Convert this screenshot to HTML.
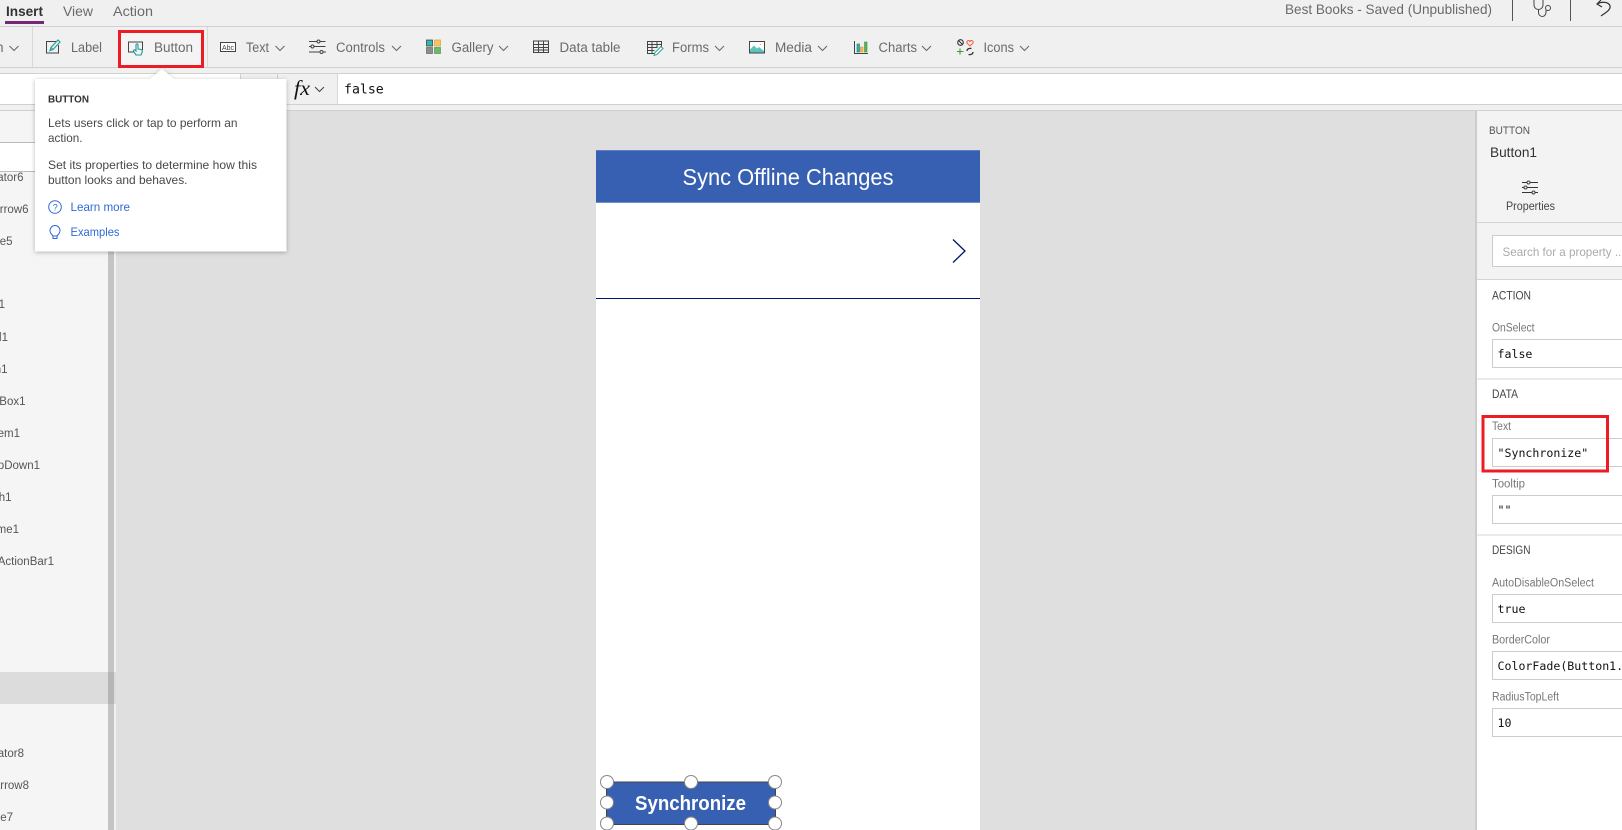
<!DOCTYPE html>
<html lang="en"><head><meta charset="utf-8"><title>Best Books</title>
<style>
html,body{margin:0;padding:0;background:#dfdfdf;overflow:hidden;width:1622px;height:830px}
svg{display:block}
text{font-family:"Liberation Sans",sans-serif;white-space:pre}
.r{font-size:13.5px;fill:#6a6a6a}
.t{font-size:14px;fill:#6a6a6a}
.l{font-size:11.5px;fill:#555}
.p{font-size:12px;fill:#484848}
.a{font-size:12px;fill:#2f6ad9}
.h{font-size:11.5px;fill:#444}
.f{font-size:11.5px;fill:#777}
text.m{font-family:"DejaVu Sans Mono",monospace;font-size:11.6px;fill:#111}
text.fm{font-family:"DejaVu Sans Mono",monospace;font-size:13.2px;fill:#111}
text.fx{font-family:"Liberation Serif",serif;font-style:italic;font-size:21px;fill:#111}
.c{fill:none;stroke:#666;stroke-width:1}
.d{fill:none;stroke:#444;stroke-width:1}
.g{fill:#fff;stroke:#888;stroke-width:1}
.b{fill:#fff;stroke:#ccc;stroke-width:1}
</style></head><body>
<svg xmlns="http://www.w3.org/2000/svg" width="1622" height="830" viewBox="0 0 1622 830">
<rect width="1622" height="830" fill="#dfdfdf"/>
<!-- top bars -->
<rect width="1622" height="111" fill="#f0f0f0"/>
<rect y="26" width="1622" height="1" fill="#d0d0d0"/>
<rect y="67" width="1622" height="1" fill="#d0d0d0"/>
<rect y="73" width="1622" height="1" fill="#d0d0d0"/>
<rect y="74" width="240" height="30" fill="#fff"/>
<rect x="240" y="73" width="1" height="31" fill="#d0d0d0"/>
<rect x="277" y="73" width="1" height="31" fill="#d0d0d0"/>
<rect x="337" y="74" width="1285" height="30" fill="#fff"/>
<rect x="337" y="74" width="1" height="30" fill="#d8d8d8"/>
<rect y="104" width="1622" height="1" fill="#d0d0d0"/>
<rect y="110" width="1622" height="1" fill="#d0d0d0"/>
<!-- tabs -->
<text x="6" y="16" font-size="14" font-weight="bold" fill="#333" textLength="37" lengthAdjust="spacingAndGlyphs">Insert</text>
<rect x="5" y="21" width="39" height="3" fill="#742774"/>
<text class="t" x="63" y="16" textLength="30" lengthAdjust="spacingAndGlyphs">View</text>
<text class="t" x="113" y="16" textLength="40" lengthAdjust="spacingAndGlyphs">Action</text>
<text class="t" x="1285" y="14" textLength="207" lengthAdjust="spacingAndGlyphs">Best Books - Saved (Unpublished)</text>
<rect x="1512" y="0" width="1" height="21" fill="#555"/>
<rect x="1570" y="0" width="1" height="21" fill="#555"/>
<path d="M1534 0v5c0 2.500 2 4.500 4.500 4.500s4.500-2 4.500-4.500V0M1538.500 9.500v3c0 2.500 2 4 4 4s3.500-2 3.500-4.500v-2" fill="none" stroke="#444"/>
<circle cx="1548" cy="8" r="2.500" fill="none" stroke="#444"/>
<path d="M1601 0l-4 4 5 3M1597 4c5-3 12-2 13 2 1 4-5 7-9 10" fill="none" stroke="#333" stroke-width="1.200"/>
<!-- ribbon -->
<text class="r" x="-4" y="52">n</text>
<path class="c" d="M9.500 46l4.500 4.500 4.500-4.500"/>
<rect x="32" y="27" width="1" height="40" fill="#d8d8d8"/>
<path d="M56 41.500h-9.500v11.500h12V45" class="d"/>
<path d="M50 50.500l1-3 7-7.500 2 2-7 7.500zM51 47.500l2 2" fill="none" stroke="#2aa198" stroke-width="1.200"/>
<text class="r" x="71" y="52" textLength="31" lengthAdjust="spacingAndGlyphs">Label</text>
<rect x="119.500" y="31.500" width="83" height="35" fill="#f4f4f4" stroke="#ed1c24" stroke-width="3"/>
<path d="M136 52h-7.500V42h14v8" class="d"/>
<path d="M136 55c-1-2-3-3-2.500-4.500s2 0 2.500 .5v-6c0-1.500 2-1.500 2 0v4l3 .5c1.500 .5 1.500 2 1 3l-1 2.500z" fill="#f4f4f4" stroke="#1d9a90" stroke-width="1.100"/>
<text class="r" x="154" y="52" textLength="39" lengthAdjust="spacingAndGlyphs">Button</text>
<rect x="207" y="27" width="1" height="40" fill="#d8d8d8"/>
<rect x="220.500" y="42.500" width="15" height="9" fill="#fff" stroke="#444"/>
<text x="222" y="50" font-size="7.500" fill="#444" textLength="12" lengthAdjust="spacingAndGlyphs">Abc</text>
<text class="r" x="246" y="52" textLength="23" lengthAdjust="spacingAndGlyphs">Text</text>
<path class="c" d="M275.500 46l4.500 4.500 4.500-4.500"/>
<path class="d" d="M309 41.500h8m3 0h5.500M309 46.500h2m3 0h11.500M309 52h11m3 0h3"/>
<circle class="d" cx="318.500" cy="41.500" r="1.500"/><circle class="d" cx="312.500" cy="46.500" r="1.500"/><circle class="d" cx="321.500" cy="52" r="1.500"/>
<text class="r" x="336" y="52" textLength="49" lengthAdjust="spacingAndGlyphs">Controls</text>
<path class="c" d="M392 46l4.500 4.500 4.500-4.500"/>
<rect x="426.500" y="40" width="6" height="6" fill="#34b5ad" stroke="#333" stroke-width=".7"/>
<rect x="434.500" y="40" width="6" height="6" fill="#fbc465" stroke="#d9a040" stroke-width=".7"/>
<rect x="426.500" y="47.500" width="6" height="6" fill="#8c8c8c" stroke="#666" stroke-width=".7"/>
<rect x="434.500" y="47.500" width="6" height="6" fill="#70b870" stroke="#4c9a4c" stroke-width=".7"/>
<text class="r" x="451.500" y="52" textLength="42" lengthAdjust="spacingAndGlyphs">Gallery</text>
<path class="c" d="M499 46l4.500 4.500 4.500-4.500"/>
<rect x="533.500" y="41" width="15" height="11.500" fill="#f0f0f0" stroke="#444"/>
<path class="d" d="M533.500 44.500h15M533.500 47.500h15M533.500 50h15M538.500 41v11.500M543.500 41v11.500"/>
<text class="r" x="559.500" y="52" textLength="61" lengthAdjust="spacingAndGlyphs">Data table</text>
<path class="d" d="M655 53.500h-7.500V41.500h14v6M647.500 44.500h14M647.500 47.500h10M647.500 50.500h7M652 41.500v12M657 41.500v6"/>
<path d="M654 55.500l1-3 6-6 2 2-6 6z" fill="#fff" stroke="#2aa198"/>
<text class="r" x="672" y="52" textLength="37" lengthAdjust="spacingAndGlyphs">Forms</text>
<path class="c" d="M715 46l4.500 4.500 4.500-4.500"/>
<rect x="749.500" y="41.500" width="15" height="11.500" fill="#fff" stroke="#444"/>
<path d="M750 52.500v-3l4-4 3 3 2-1.500 5 4v1.500z" fill="#5cc4bd"/>
<rect x="760" y="44" width="1" height="1" fill="#e8b040"/>
<text class="r" x="775" y="52" textLength="37" lengthAdjust="spacingAndGlyphs">Media</text>
<path class="c" d="M818 46l4.500 4.500 4.500-4.500"/>
<path class="d" d="M854.500 41v12.500H868"/>
<rect x="857" y="44" width="2.500" height="8" fill="#2fb0a8" stroke="#1d7a76" stroke-width=".6"/>
<rect x="860.500" y="47" width="2.500" height="5" fill="#fbb84a" stroke="#d99a30" stroke-width=".6"/>
<rect x="864.500" y="42" width="2.500" height="10" fill="#5cb35c" stroke="#3f913f" stroke-width=".6"/>
<text class="r" x="878.500" y="52" textLength="38.500" lengthAdjust="spacingAndGlyphs">Charts</text>
<path class="c" d="M922 46l4.500 4.500 4.500-4.500"/>
<circle cx="960.500" cy="42.500" r="2.800" fill="none" stroke="#333" stroke-width="1.100"/><path d="M958.500 40.500l4 4" stroke="#333" stroke-width="1"/>
<path d="M970 46l-3-3c-1-2 2-3.500 3-1.500 1-2 4-.5 3 1.500z" fill="none" stroke="#ef6a4a" stroke-width="1.100"/>
<path d="M960 48.500v6M957 51.500h6.500" stroke="#3a9a3a" stroke-width="1.100" fill="none"/>
<path d="M967 51c0-2 2-3 4.500-2.500M973 52c0 2-2 3-4.500 2.500" fill="none" stroke="#333" stroke-width="1.300"/>
<text class="r" x="983.500" y="52" textLength="30.500" lengthAdjust="spacingAndGlyphs">Icons</text>
<path class="c" d="M1020 46l4.500 4.500 4.500-4.500"/>
<!-- formula bar -->
<text class="fx" x="294" y="95" textLength="16" lengthAdjust="spacingAndGlyphs">fx</text>
<path class="c" d="M315 87l4.500 4.500 4.500-4.500" style="stroke:#444"/>
<text class="fm" x="344" y="93.500">false</text>
<!-- left panel -->
<rect y="111" width="108" height="719" fill="#f5f5f5"/>
<rect y="142" width="108" height="1" fill="#bbb"/>
<rect y="143" width="108" height="28" fill="#fff"/>
<rect y="171" width="108" height="1" fill="#bbb"/>
<rect x="108" y="111" width="6" height="719" fill="#c4c4c4"/>
<rect x="114" y="111" width="2" height="719" fill="#f2f2f2"/>
<g text-anchor="end">
<text class="l" x="23.500" y="181">Separator6</text>
<text class="l" x="28.500" y="213">Arrow6</text>
<text class="l" x="12.500" y="245">Rectangle5</text>
<text class="l" x="5" y="308">Label1</text>
<text class="l" x="8" y="341">Control1</text>
<text class="l" x="7.500" y="373">Screen1</text>
<text class="l" x="25.500" y="405">TextBox1</text>
<text class="l" x="20" y="437">Item1</text>
<text class="l" x="40" y="469">DropDown1</text>
<text class="l" x="11.500" y="501">Search1</text>
<text class="l" x="19" y="533">Frame1</text>
<text class="l" x="54" y="565">ActionBar1</text>
<text class="l" x="24" y="757">Separator8</text>
<text class="l" x="29" y="789">Arrow8</text>
<text class="l" x="13" y="821">Rectangle7</text>
</g>
<rect y="672" width="116" height="32" fill="#dcdcdc"/>
<rect x="108" y="672" width="6" height="32" fill="#b6b6b6"/>
<!-- phone -->
<rect x="596" y="150" width="384" height="680" fill="#fff"/>
<rect x="596" y="150" width="384" height="53" fill="#3860b2"/>
<rect x="596" y="150" width="384" height="1" fill="#5f7fc4"/>
<rect x="596" y="202" width="384" height="1" fill="#6f8fd0"/>
<text x="682.500" y="185" font-size="23" fill="#fff" textLength="211" lengthAdjust="spacingAndGlyphs">Sync Offline Changes</text>
<path d="M953 239.500l12 11.500-12 11.500" fill="none" stroke="#00146e" stroke-width="1.300"/>
<rect x="596" y="298" width="384" height="1" fill="#00146e"/>
<rect x="606.500" y="782" width="169" height="42.500" fill="#3860b2" stroke="#444" stroke-width="1"/>
<text x="635" y="810" font-size="20" font-weight="bold" fill="#fff" textLength="111" lengthAdjust="spacingAndGlyphs">Synchronize</text>
<g>
<circle class="g" cx="607" cy="782" r="6.500"/><circle class="g" cx="691" cy="782" r="6.500"/><circle class="g" cx="775" cy="782" r="6.500"/>
<circle class="g" cx="607" cy="802.500" r="6.500"/><circle class="g" cx="775" cy="802.500" r="6.500"/>
<circle class="g" cx="607" cy="823.500" r="6.500"/><circle class="g" cx="691" cy="823.500" r="6.500"/><circle class="g" cx="775" cy="823.500" r="6.500"/>
</g>
<!-- right panel -->
<rect x="1475" y="111" width="147" height="719" fill="#fff"/>
<rect x="1475" y="111" width="2" height="719" fill="#ccc"/>
<rect x="1477" y="111" width="145" height="168" fill="#f3f3f3"/>
<rect x="1477" y="222" width="145" height="1" fill="#d4d4d4"/>
<rect x="1477" y="279" width="145" height="1" fill="#d4d4d4"/>
<text x="1489" y="134" font-size="11" fill="#555" textLength="41" lengthAdjust="spacingAndGlyphs">BUTTON</text>
<text x="1490" y="157" font-size="14" fill="#333" textLength="47" lengthAdjust="spacingAndGlyphs">Button1</text>
<path class="d" d="M1522 182.500h5m3 0h8M1522 187.500h2m3 0h11M1522 192.500h10m3 0h3" style="stroke:#333"/>
<circle class="d" cx="1528.500" cy="182.500" r="1.500"/><circle class="d" cx="1525.500" cy="187.500" r="1.500"/><circle class="d" cx="1533.500" cy="192.500" r="1.500"/>
<text x="1506" y="210" font-size="11.500" fill="#444" textLength="49" lengthAdjust="spacingAndGlyphs">Properties</text>
<rect class="b" x="1492.500" y="235.500" width="140" height="31"/>
<text x="1502.500" y="256" font-size="12" fill="#aaa" textLength="122" lengthAdjust="spacingAndGlyphs">Search for a property ...</text>
<text class="h" x="1492" y="299.500" textLength="39" lengthAdjust="spacingAndGlyphs">ACTION</text>
<text class="f" x="1492" y="331.500" textLength="42.500" lengthAdjust="spacingAndGlyphs">OnSelect</text>
<rect class="b" x="1492.500" y="339.500" width="140" height="28"/>
<text class="m" x="1497.500" y="358">false</text>
<rect x="1477" y="378.500" width="145" height="1" fill="#d4d4d4"/>
<text class="h" x="1492" y="398" textLength="26" lengthAdjust="spacingAndGlyphs">DATA</text>
<text class="f" x="1492" y="430" textLength="19" lengthAdjust="spacingAndGlyphs">Text</text>
<rect class="b" x="1492.500" y="438.500" width="140" height="28"/>
<text class="m" x="1497.500" y="457">"Synchronize"</text>
<text class="f" x="1492" y="487.500" textLength="33" lengthAdjust="spacingAndGlyphs">Tooltip</text>
<rect class="b" x="1492.500" y="495.500" width="140" height="28"/>
<text class="m" x="1497.500" y="514">""</text>
<rect x="1477" y="534.500" width="145" height="1" fill="#d4d4d4"/>
<text class="h" x="1492" y="554" textLength="38.500" lengthAdjust="spacingAndGlyphs">DESIGN</text>
<text class="f" x="1492" y="586.500" textLength="102" lengthAdjust="spacingAndGlyphs">AutoDisableOnSelect</text>
<rect class="b" x="1492.500" y="594.500" width="140" height="28"/>
<text class="m" x="1497.500" y="613">true</text>
<text class="f" x="1492" y="643.500" textLength="58" lengthAdjust="spacingAndGlyphs">BorderColor</text>
<rect class="b" x="1492.500" y="651.500" width="140" height="28"/>
<text class="m" x="1497.500" y="670">ColorFade(Button1.BorderColor)</text>
<text class="f" x="1492" y="700.500" textLength="67" lengthAdjust="spacingAndGlyphs">RadiusTopLeft</text>
<rect class="b" x="1492.500" y="708.500" width="140" height="28"/>
<text class="m" x="1497.500" y="727">10</text>
<rect x="1483" y="416.500" width="124.500" height="54.500" fill="none" stroke="#ed1c24" stroke-width="3"/>
<!-- popover -->
<defs><filter id="s" x="-10%" y="-10%" width="120%" height="120%"><feDropShadow dx="0" dy="1" stdDeviation="2" flood-color="#000" flood-opacity=".28"/></filter></defs>
<path d="M35 79H150L162 69L174 79H286.500V251.500H35Z" fill="#fff" filter="url(#s)"/>
<text x="48" y="102.500" font-size="10.500" font-weight="bold" fill="#333" textLength="41" lengthAdjust="spacingAndGlyphs">BUTTON</text>
<text class="p" x="48" y="127" textLength="189.500" lengthAdjust="spacingAndGlyphs">Lets users click or tap to perform an</text>
<text class="p" x="48" y="142" textLength="34.500" lengthAdjust="spacingAndGlyphs">action.</text>
<text class="p" x="48" y="169" textLength="209" lengthAdjust="spacingAndGlyphs">Set its properties to determine how this</text>
<text class="p" x="48" y="184" textLength="139.500" lengthAdjust="spacingAndGlyphs">button looks and behaves.</text>
<circle cx="55" cy="207" r="6.300" fill="none" stroke="#2f6ad9"/>
<text x="52.700" y="210.500" font-size="9" fill="#2f6ad9">?</text>
<text class="a" x="70.500" y="211" textLength="59.500" lengthAdjust="spacingAndGlyphs">Learn more</text>
<path d="M53 238.500v-2c0-1.500-3-2.500-3-6a5 5 0 0 1 10 0c0 3.500-3 4.500-3 6v2zM53 236h4" fill="none" stroke="#2f6ad9"/>
<text class="a" x="70.500" y="236" textLength="49" lengthAdjust="spacingAndGlyphs">Examples</text>
</svg>
</body></html>
